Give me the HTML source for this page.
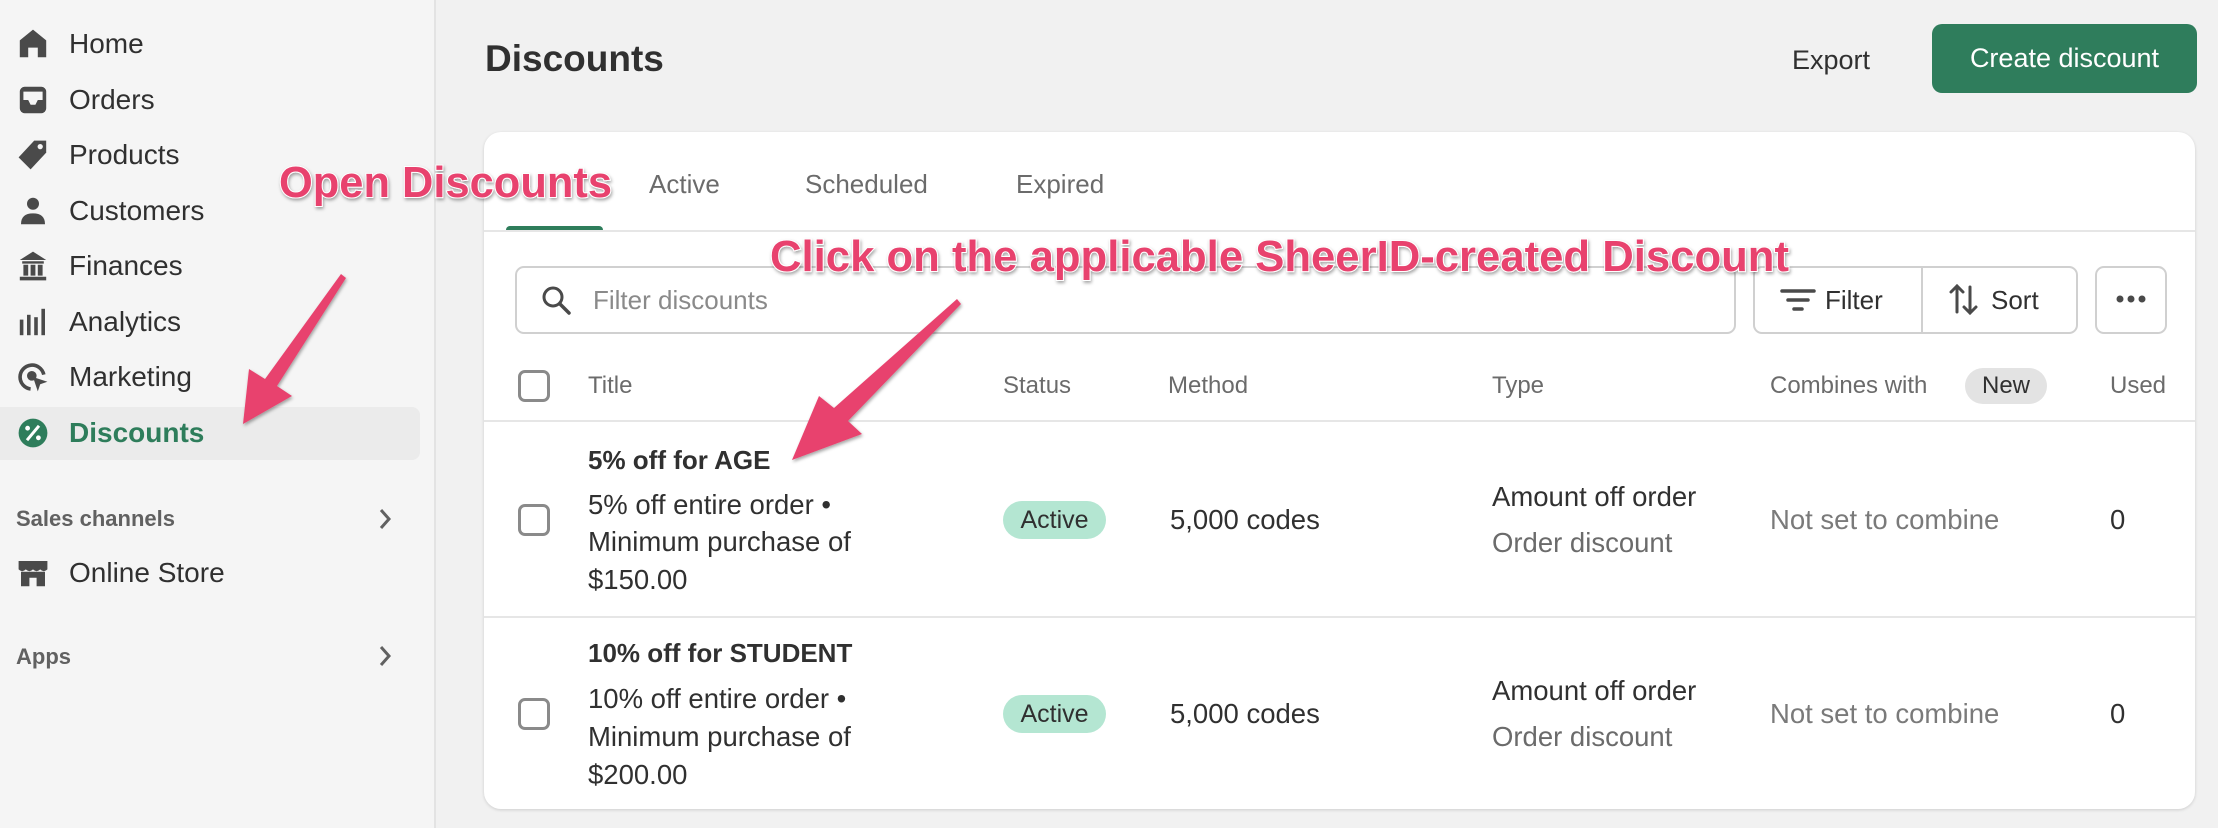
<!DOCTYPE html>
<html><head><meta charset="utf-8"><style>
*{margin:0;padding:0;box-sizing:border-box}
body{width:2218px;height:828px;overflow:hidden;background:#f1f1f1;font-family:"Liberation Sans",sans-serif;color:#303030;position:relative}
.a{position:absolute;white-space:nowrap;line-height:32px;height:32px}
.side{position:absolute;left:0;top:0;width:436px;height:828px;background:#f5f5f5;border-right:2px solid #e3e3e3}
.nav{font-size:28px;left:69px}
.ic{position:absolute;left:15px;width:36px;height:36px}
.g{color:#6b6b6b}
.card{position:absolute;left:484px;top:132px;width:1711px;height:677px;background:#fff;border-radius:17px;box-shadow:0 1px 3px rgba(0,0,0,.15);overflow:hidden}
.tb{font-size:27.5px}
.tab{font-size:26px}
.hd{font-size:24px}
.hl{position:absolute;left:0;width:1711px;height:2px;background:#e6e6e6}
.cb{position:absolute;width:32px;height:32px;border:3px solid #8a8a8a;border-radius:7px;background:#fff}
.pill{position:absolute;background:#b4e6d2;border-radius:20px;font-size:25px;text-align:center;line-height:38px;height:38px}
</style></head><body>
<div class="side"></div>
<div style="position:absolute;left:0;top:407px;width:420px;height:53px;background:#ebebeb;border-radius:0 8px 8px 0"></div>
<svg class="ic" style="top:26px" viewBox="0 0 30 30"><path d="M4 12 L15 3 L26 12 V26 H19 V18 H11 V26 H4Z" fill="#4a4a4a"/></svg>
<svg class="ic" style="top:82px" viewBox="0 0 30 30"><rect x="4" y="4" width="22" height="22" rx="4" fill="#4a4a4a"/><path d="M7 15 H11 L13 19 H17 L19 15 H23 V8 H7Z" fill="#f5f5f5"/></svg>
<svg class="ic" style="top:137px" viewBox="0 0 30 30"><path d="M16 3 H26 V13 L13 27 L3 17Z" fill="#4a4a4a"/><circle cx="21" cy="8" r="2.2" fill="#f5f5f5"/></svg>
<svg class="ic" style="top:193px" viewBox="0 0 30 30"><circle cx="15" cy="9" r="5" fill="#4a4a4a"/><path d="M5 26 Q5 17 15 17 Q25 17 25 26Z" fill="#4a4a4a"/></svg>
<svg class="ic" style="top:248px" viewBox="0 0 30 30"><path d="M4 10 L15 3 L26 10Z M6 11 H24 V13 H6Z M7 14 H11 V23 H7Z M13 14 H17 V23 H13Z M19 14 H23 V23 H19Z M4 24 H26 V27 H4Z" fill="#4a4a4a"/></svg>
<svg class="ic" style="top:304px" viewBox="0 0 30 30"><rect x="4" y="13" width="3" height="13" fill="#4a4a4a"/><rect x="10" y="9" width="3" height="17" fill="#4a4a4a"/><rect x="16" y="11" width="3" height="15" fill="#4a4a4a"/><rect x="22" y="4" width="3" height="22" fill="#4a4a4a"/></svg>
<svg class="ic" style="top:359px" viewBox="0 0 30 30"><path d="M13 25 A10 10 0 1 1 24 13" stroke="#4a4a4a" stroke-width="3" fill="none"/><circle cx="14" cy="14" r="4" fill="#4a4a4a"/><path d="M15 15 L27 19 L21 21 L19 27Z" fill="#4a4a4a"/></svg>
<svg class="ic" style="top:415px" viewBox="0 0 30 30"><circle cx="15" cy="15" r="12" fill="#2e7d5b"/><path d="M10 21 L20 9" stroke="#fff" stroke-width="2.5"/><circle cx="10.5" cy="11" r="2" fill="#fff"/><circle cx="19.5" cy="19" r="2" fill="#fff"/></svg>
<svg class="ic" style="top:555px" viewBox="0 0 30 30"><path d="M3 5 H27 V12 Q24 15 21 12 Q18 15 15 12 Q12 15 9 12 Q6 15 3 12Z M5 14 H25 V26 H18 V19 H12 V26 H5Z" fill="#4a4a4a"/></svg>
<div class="a nav" style="top:28px">Home</div>
<div class="a nav" style="top:84px">Orders</div>
<div class="a nav" style="top:139px">Products</div>
<div class="a nav" style="top:195px">Customers</div>
<div class="a nav" style="top:250px">Finances</div>
<div class="a nav" style="top:306px">Analytics</div>
<div class="a nav" style="top:361px">Marketing</div>
<div class="a nav" style="top:417px;color:#2e7d5b;font-weight:bold">Discounts</div>
<div class="a" style="top:503px;left:16px;font-size:22px;font-weight:bold;color:#616161">Sales channels</div>
<div class="a nav" style="top:557px">Online Store</div>
<div class="a" style="top:641px;left:16px;font-size:22px;font-weight:bold;color:#616161">Apps</div>
<svg style="position:absolute;left:376px;top:506px" width="18" height="26"><path d="M5 4 L13 13 L5 22" stroke="#616161" stroke-width="3" fill="none"/></svg>
<svg style="position:absolute;left:376px;top:643px" width="18" height="26"><path d="M5 4 L13 13 L5 22" stroke="#616161" stroke-width="3" fill="none"/></svg>

<div class="a" style="left:485px;top:39px;font-size:37px;font-weight:bold;line-height:40px;height:40px">Discounts</div>
<div class="a" style="left:1792px;top:44px;font-size:27px">Export</div>
<div style="position:absolute;left:1932px;top:24px;width:265px;height:69px;background:#2f7d5c;border-radius:10px;color:#fff;font-size:27px;text-align:center;line-height:69px">Create discount</div>

<div class="card">
 <div class="a tab g" style="left:165px;top:36px">Active</div>
 <div class="a tab g" style="left:321px;top:36px">Scheduled</div>
 <div class="a tab g" style="left:532px;top:36px">Expired</div>
 <div style="position:absolute;left:22px;top:94px;width:97px;height:6px;background:#2e7d5b;border-radius:4px 4px 0 0"></div>
 <div class="hl" style="top:98px"></div>
 <div style="position:absolute;left:31px;top:134px;width:1221px;height:68px;border:2px solid #d0d0d0;border-radius:9px"></div>
 <svg style="position:absolute;left:56px;top:152px" width="34" height="34"><circle cx="13" cy="13" r="9" stroke="#4a4a4a" stroke-width="3" fill="none"/><path d="M20 20 L29 29" stroke="#4a4a4a" stroke-width="3.5" stroke-linecap="round"/></svg>
 <div class="a tab" style="left:109px;top:152px;color:#8a8a8a">Filter discounts</div>
 <div style="position:absolute;left:1269px;top:134px;width:325px;height:68px;border:2px solid #d0d0d0;border-radius:9px"></div>
 <div style="position:absolute;left:1437px;top:134px;width:2px;height:68px;background:#d0d0d0"></div>
 <svg style="position:absolute;left:1296px;top:154px" width="36" height="30"><path d="M2 5 H34 M8 14 H28 M14 23 H22" stroke="#4a4a4a" stroke-width="3.5" stroke-linecap="round"/></svg>
 <div class="a tab" style="left:1341px;top:152px">Filter</div>
 <svg style="position:absolute;left:1464px;top:150px" width="34" height="36"><path d="M9 30 V4 M3 10 L9 4 L15 10 M22 5 V31 M16 25 L22 31 L28 25" stroke="#4a4a4a" stroke-width="3" fill="none" stroke-linecap="round"/></svg>
 <div class="a tab" style="left:1507px;top:152px">Sort</div>
 <div style="position:absolute;left:1611px;top:134px;width:72px;height:68px;border:2px solid #d0d0d0;border-radius:9px"></div>
 <svg style="position:absolute;left:1630px;top:160px" width="34" height="14"><circle cx="6" cy="7" r="3.5" fill="#4a4a4a"/><circle cx="17" cy="7" r="3.5" fill="#4a4a4a"/><circle cx="28" cy="7" r="3.5" fill="#4a4a4a"/></svg>

 <div class="cb" style="left:34px;top:238px"></div>
 <div class="a g hd" style="left:104px;top:238px">Title</div>
 <div class="a g hd" style="left:519px;top:238px">Status</div>
 <div class="a g hd" style="left:684px;top:238px">Method</div>
 <div class="a g hd" style="left:1008px;top:238px">Type</div>
 <div class="a g hd" style="left:1286px;top:238px">Combines with</div>
 <div style="position:absolute;left:1481px;top:236px;width:82px;height:36px;background:#e3e3e3;border-radius:18px;font-size:24px;text-align:center;line-height:36px">New</div>
 <div class="a g hd" style="left:1626px;top:238px">Used</div>
 <div class="hl" style="top:288px"></div>

 <div class="cb" style="left:34px;top:372px"></div>
 <div class="a" style="left:104px;top:312px;font-size:26px;font-weight:bold">5% off for AGE</div>
 <div class="a tb" style="left:104px;top:357px">5% off entire order •</div>
 <div class="a tb" style="left:104px;top:394px">Minimum purchase of</div>
 <div class="a tb" style="left:104px;top:432px">$150.00</div>
 <div class="pill" style="left:519px;top:369px;width:103px">Active</div>
 <div class="a tb" style="left:686px;top:372px">5,000 codes</div>
 <div class="a tb" style="left:1008px;top:349px">Amount off order</div>
 <div class="a tb g" style="left:1008px;top:395px">Order discount</div>
 <div class="a tb" style="left:1286px;top:372px;color:#7a7a7a">Not set to combine</div>
 <div class="a tb" style="left:1626px;top:372px">0</div>
 <div class="hl" style="top:484px"></div>

 <div class="cb" style="left:34px;top:566px"></div>
 <div class="a" style="left:104px;top:505px;font-size:26px;font-weight:bold">10% off for STUDENT</div>
 <div class="a tb" style="left:104px;top:551px">10% off entire order •</div>
 <div class="a tb" style="left:104px;top:589px">Minimum purchase of</div>
 <div class="a tb" style="left:104px;top:627px">$200.00</div>
 <div class="pill" style="left:519px;top:563px;width:103px">Active</div>
 <div class="a tb" style="left:686px;top:566px">5,000 codes</div>
 <div class="a tb" style="left:1008px;top:543px">Amount off order</div>
 <div class="a tb g" style="left:1008px;top:589px">Order discount</div>
 <div class="a tb" style="left:1286px;top:566px;color:#7a7a7a">Not set to combine</div>
 <div class="a tb" style="left:1626px;top:566px">0</div>
</div>

<svg style="position:absolute;left:0;top:0" width="2218" height="828">
 <defs><filter id="sh"><feDropShadow dx="1" dy="2" stdDeviation="1.5" flood-color="#000" flood-opacity=".35"/></filter></defs>
 <g filter="url(#sh)" fill="#e8436e" stroke="#fff" stroke-width="2" paint-order="stroke" font-family="Liberation Sans, sans-serif" font-weight="bold" font-size="44">
  <text x="279" y="197" textLength="333" lengthAdjust="spacingAndGlyphs">Open Discounts</text>
  <text x="770" y="271" textLength="1019" lengthAdjust="spacingAndGlyphs">Click on the applicable SheerID-created Discount</text>
 </g>
 <g fill="#e8436e" filter="url(#sh)">
  <path d="M341 274 L346 278 L277 386 L292 396 L243 424 L249 369 L265 379 Z"/>
  <path d="M957 299 L961 304 L848 421 L862 434 L792 460 L819 396 L834 408 Z"/>
 </g>
</svg>
</body></html>
